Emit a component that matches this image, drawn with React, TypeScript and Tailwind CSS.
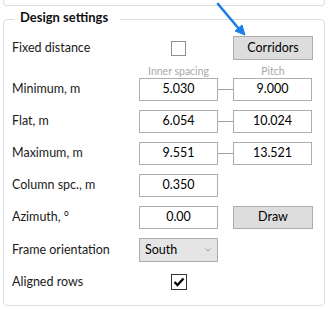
import React from "react";

const font = { fontFamily: "Lato, 'Noto Sans', sans-serif" };

function Input({ value }: { value: string }) {
  return (
    <div className="h-[23px] w-[79px] border border-[#abadb3] bg-white flex items-center justify-center text-[12.5px] text-black">
      {value}
    </div>
  );
}

function Btn({ label, h }: { label: string; h: string }) {
  return (
    <div className={`${h} w-[80px] border border-[#adadad] bg-[#dddddd] flex items-center justify-center text-[12.5px] text-black`}>
      {label}
    </div>
  );
}

function Label({ text }: { text: string }) {
  return <div className="w-[127px] text-[12.5px] text-[#1a1a1a]">{text}</div>;
}

function Connector() {
  return (
    <div className="w-[15px] flex items-center">
      <div className="h-px w-full bg-[#a0a0a0]" />
    </div>
  );
}

export default function App() {
  return (
    <div className="relative w-[331px] h-[309px] bg-white overflow-hidden" style={font}>
      <div className="ml-[3px] w-[322px] h-[6px] border-x border-b border-[#d5dfe5] rounded-b-[4px]" />
      <fieldset className="ml-[3px] mt-[1px] w-[322px] h-[299px] border border-[#d5dfe5] rounded-[4px] pl-[8px] pr-[10px]">
        <legend className="ml-[2px] pl-[6px] pr-[12px] pb-[4px] text-[13px] leading-[20px] font-bold text-[#111]">
          Design settings
        </legend>
        <div className="flex flex-col">
          <div className="mt-[5px] flex items-center h-[24px]">
            <Label text="Fixed distance" />
            <div className="w-[79px] flex justify-center">
              <div className="w-[15px] h-[15px] border border-[#8f8f8f] bg-white" />
            </div>
            <div className="w-[15px]" />
            <Btn label="Corridors" h="h-[24px]" />
          </div>
          <div className="flex h-[18px] items-end text-[10.5px] leading-[12px] text-[#a8a8a8] pb-[1px]">
            <div className="w-[127px]" />
            <div className="w-[79px] text-center">Inner spacing</div>
            <div className="w-[15px]" />
            <div className="w-[80px] text-center">Pitch</div>
          </div>
          <div className="flex items-center h-[23px]">
            <Label text="Minimum, m" />
            <Input value="5.030" />
            <Connector />
            <Input value="9.000" />
          </div>
          <div className="mt-[9px] flex items-center h-[23px]">
            <Label text="Flat, m" />
            <Input value="6.054" />
            <Connector />
            <Input value="10.024" />
          </div>
          <div className="mt-[9px] flex items-center h-[23px]">
            <Label text="Maximum, m" />
            <Input value="9.551" />
            <Connector />
            <Input value="13.521" />
          </div>
          <div className="mt-[9px] flex items-center h-[23px]">
            <Label text="Column spc., m" />
            <Input value="0.350" />
          </div>
          <div className="mt-[9px] flex items-center h-[23px]">
            <Label text="Azimuth, °" />
            <Input value="0.00" />
            <div className="w-[15px]" />
            <Btn label="Draw" h="h-[23px]" />
          </div>
          <div className="mt-[9px] flex items-center h-[24px]">
            <Label text="Frame orientation" />
            <div className="h-[24px] w-[79px] border border-[#acacac] bg-[#e5e5e5] flex items-center justify-between pl-[5px] pr-[6px] text-[12.5px] text-black">
              <span>South</span>
              <svg width="6" height="4" viewBox="0 0 6 4">
                <path d="M0.5 0.5 L3 3 L5.5 0.5" stroke="#9a9a9a" strokeWidth="1" fill="none" />
              </svg>
            </div>
          </div>
          <div className="mt-[10px] flex items-center h-[20px]">
            <Label text="Aligned rows" />
            <div className="w-[79px] flex justify-center">
              <div className="w-[16px] h-[16px] border border-[#333] bg-white flex items-center justify-center">
                <svg width="12" height="10" viewBox="0 0 12 10">
                  <path d="M1.5 5 L4.5 8 L10.5 1.5" stroke="#000" strokeWidth="2.4" fill="none" />
                </svg>
              </div>
            </div>
          </div>
        </div>
      </fieldset>
      <svg className="absolute left-0 top-0 pointer-events-none" width="331" height="60" viewBox="0 0 331 60">
        <line x1="218" y1="4" x2="239" y2="29" stroke="#1a7ee8" strokeWidth="2.6" strokeLinecap="round" />
        <path d="M245 35 L235 31 L242 25 Z" fill="#1a7ee8" stroke="#1a7ee8" strokeWidth="1" strokeLinejoin="round" />
      </svg>
    </div>
  );
}
